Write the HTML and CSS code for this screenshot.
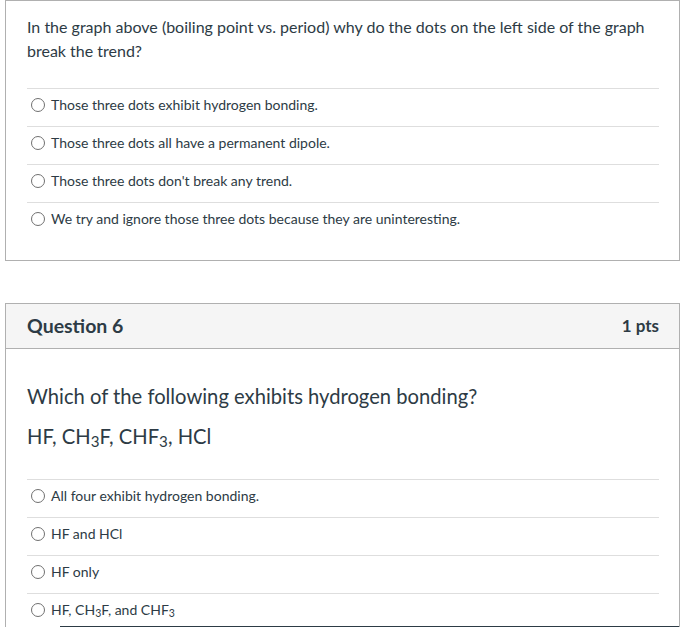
FILE: index.html
```html
<!DOCTYPE html>
<html lang="en">
<head>
<meta charset="utf-8">
<title>Quiz</title>
<link rel="stylesheet" href="styles.css">
</head>
<body>
<div class="page">
  <section class="card card-first">
    <div class="body">
      <p class="qtext">In the graph above (boiling point vs. period) why do the dots on the left side of the graph break the trend?</p>
      <ul class="answers">
        <li class="answer"><span class="radio"></span><span class="label">Those three dots exhibit hydrogen bonding.</span></li>
        <li class="answer"><span class="radio"></span><span class="label">Those three dots all have a permanent dipole.</span></li>
        <li class="answer"><span class="radio"></span><span class="label">Those three dots don't break any trend.</span></li>
        <li class="answer"><span class="radio"></span><span class="label">We try and ignore those three dots because they are uninteresting.</span></li>
      </ul>
    </div>
  </section>

  <section class="card card-second">
    <header class="header">
      <h2 class="title">Question 6</h2>
      <span class="pts">1 pts</span>
    </header>
    <div class="body body-second">
      <p class="qlarge">Which of the following exhibits hydrogen bonding?</p>
      <p class="qlarge">HF, CH<sub>3</sub>F, CHF<sub>3</sub>, HCl</p>
      <ul class="answers answers-second">
        <li class="answer"><span class="radio"></span><span class="label">All four exhibit hydrogen bonding.</span></li>
        <li class="answer"><span class="radio"></span><span class="label">HF and HCl</span></li>
        <li class="answer"><span class="radio"></span><span class="label">HF only</span></li>
        <li class="answer"><span class="radio"></span><span class="label">HF, CH<sub>3</sub>F, and CHF<sub>3</sub></span></li>
      </ul>
    </div>
  </section>
</div>
<div class="bottom-bar"></div>
</body>
</html>
```

FILE: styles.css
```css
html, body {
  margin: 0;
  padding: 0;
  background: #ffffff;
}

body {
  font-family: Lato, "Open Sans", "Liberation Sans", sans-serif;
  color: #2d3b45;
}

.page {
  padding: 0 14px 0 5px;
  display: flex;
  flex-direction: column;
  gap: 42px;
}

.card {
  border: 1px solid #b0b0b0;
  background: #ffffff;
}

.body {
  padding: 14px 20px 20px 21px;
}

.qtext {
  margin: 0 0 25px 0;
  font-size: 16px;
  line-height: 24px;
}

.answers {
  list-style: none;
  margin: 0;
  padding: 0;
}

.answer {
  display: flex;
  align-items: center;
  gap: 6px;
  border-top: 1px solid #dedede;
  font-size: 14px;
  padding-left: 4px;
  padding-bottom: 5px;
  box-sizing: content-box;
  height: 32px;
}

.radio {
  width: 12px;
  height: 12px;
  border: 1px solid #707070;
  border-radius: 50%;
  flex: 0 0 auto;
  background: #fff;
}

.label {
  line-height: 18px;
}

sub {
  font-size: 0.75em;
  vertical-align: -0.2em;
  line-height: 0;
}

.header {
  display: flex;
  justify-content: space-between;
  align-items: center;
  background: #f5f5f5;
  border-bottom: 1px solid #b0b0b0;
  height: 44px;
  padding: 0 20px 0 21px;
}

.title {
  margin: 0;
  font-size: 19.5px;
  font-weight: 700;
  margin-top: -1px;
}

.pts {
  font-size: 17px;
  font-weight: 700;
  margin-top: -1px;
}

.body-second {
  padding-top: 33px;
}

.qlarge {
  margin: 0 0 12px 0;
  font-size: 20.2px;
  line-height: 28px;
}

.qlarge + .qlarge {
  margin-bottom: 29px;
}

.bottom-bar {
  position: fixed;
  left: 60px;
  right: 15px;
  bottom: 0;
  height: 1px;
  background: #2d3b45;
}
```
